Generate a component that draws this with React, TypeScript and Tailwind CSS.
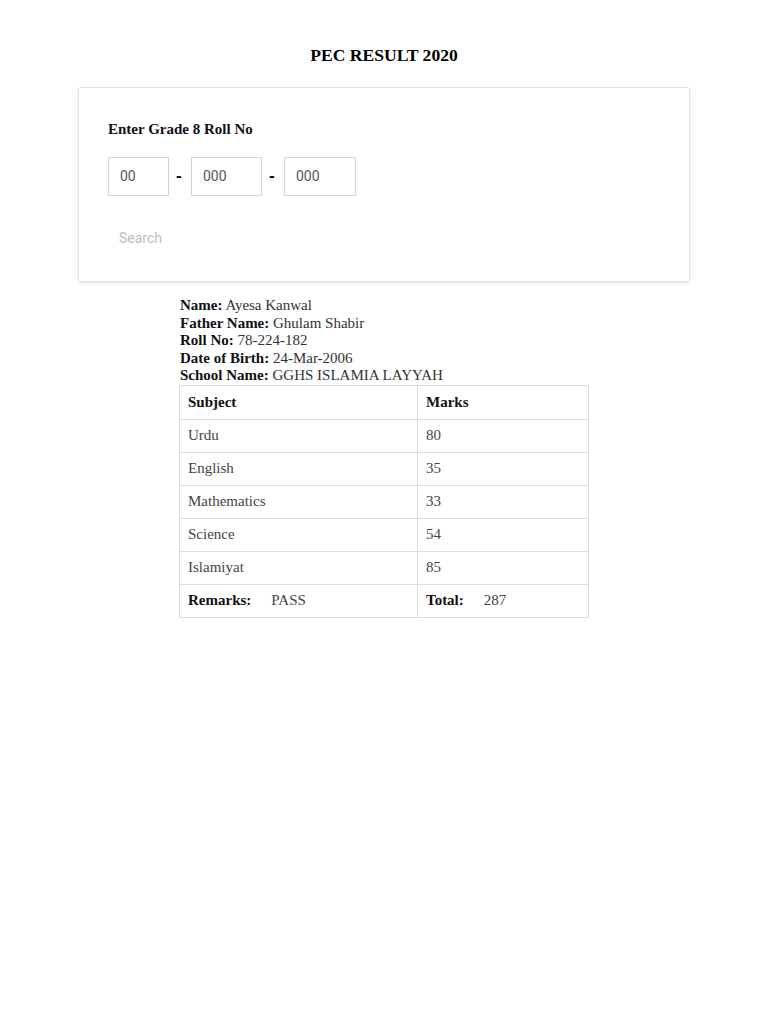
import React from 'react';

const serif = { fontFamily: '"Liberation Serif", "Times New Roman", serif' };

const info = [
  { label: 'Name:', value: 'Ayesa Kanwal' },
  { label: 'Father Name:', value: 'Ghulam Shabir' },
  { label: 'Roll No:', value: '78-224-182' },
  { label: 'Date of Birth:', value: '24-Mar-2006' },
  { label: 'School Name:', value: 'GGHS ISLAMIA LAYYAH' },
];

const marks = [
  { subject: 'Urdu', marks: '80' },
  { subject: 'English', marks: '35' },
  { subject: 'Mathematics', marks: '33' },
  { subject: 'Science', marks: '54' },
  { subject: 'Islamiyat', marks: '85' },
];

export default function App() {
  return (
    <div className="min-h-[1024px] w-[768px] bg-white text-[#222]" style={serif}>
      <h1 className="pt-[45px] text-center text-[17.6px] font-bold leading-5 text-black">PEC RESULT 2020</h1>

      <div className="mx-[78px] mt-[22px] h-[195px] rounded-[3px] border border-[#e3e3e3] px-[29px] pt-[31px] shadow-[0_1px_3px_rgba(0,0,0,0.12)]">
        <div className="text-[15px] font-bold leading-5 text-[#111]">Enter Grade 8 Roll No</div>

        <div className="mt-[18px] flex items-center" style={{ fontFamily: 'Roboto, "Liberation Sans", sans-serif' }}>
          <div className="flex h-[39px] w-[61px] items-center border border-[#d4d4d4] pl-[11px] text-[14px] text-[#555]">00</div>
          <span className="w-[22px] pr-[2px] text-center text-[16px] font-bold text-black">-</span>
          <div className="flex h-[39px] w-[71px] items-center border border-[#d4d4d4] pl-[11px] text-[14px] text-[#555]">000</div>
          <span className="w-[22px] pr-[2px] text-center text-[16px] font-bold text-black">-</span>
          <div className="flex h-[39px] w-[72px] items-center border border-[#d4d4d4] pl-[11px] text-[14px] text-[#555]">000</div>
        </div>

        <div className="mt-[32px] pl-[11px] text-[14px] text-[#bdbdbd]" style={{ fontFamily: 'Roboto, "Liberation Sans", sans-serif' }}>
          Search
        </div>
      </div>

      <div className="mx-auto mt-[15px] w-[410px]">
        <div className="pl-[1px] text-[15px] leading-[17.5px] text-[#333]">
          {info.map(i => (
            <div key={i.label}>
              <span className="font-bold text-[#111]">{i.label}</span> {i.value}
            </div>
          ))}
        </div>

        <table className="w-[410px] border-collapse text-[15px] text-[#444]">
          <tbody>
            <tr className="h-[34px]">
              <td className="w-[238px] border border-[#dcdcdc] px-[8px] font-bold text-[#111]">Subject</td>
              <td className="border border-[#dcdcdc] px-[8px] font-bold text-[#111]">Marks</td>
            </tr>
            {marks.map(m => (
              <tr key={m.subject} className="h-[33px]">
                <td className="border border-[#dcdcdc] px-[8px]">{m.subject}</td>
                <td className="border border-[#dcdcdc] px-[8px]">{m.marks}</td>
              </tr>
            ))}
            <tr className="h-[33px]">
              <td className="border border-[#dcdcdc] px-[8px]">
                <span className="font-bold text-[#111]">Remarks:</span>
                <span className="ml-[20px]">PASS</span>
              </td>
              <td className="border border-[#dcdcdc] px-[8px]">
                <span className="font-bold text-[#111]">Total:</span>
                <span className="ml-[20px]">287</span>
              </td>
            </tr>
          </tbody>
        </table>
      </div>
    </div>
  );
}
